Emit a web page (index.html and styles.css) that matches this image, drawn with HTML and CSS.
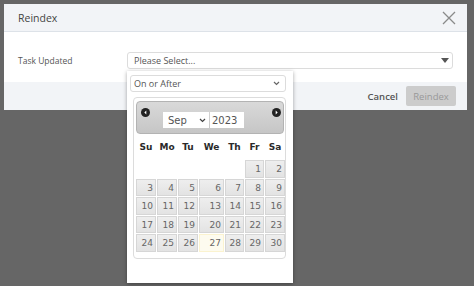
FILE: index.html
```html
<!DOCTYPE html>
<html>
<head>
<meta charset="utf-8">
<link rel="stylesheet" href="styles.css">
</head>
<body>
<div class="modal">
  <div class="modal-header">
    <span class="title">Reindex</span>
    <svg class="close" width="14" height="14" viewBox="0 0 14 14"><path d="M1 1 L13 13 M13 1 L1 13" stroke="#8a8a8a" stroke-width="1.3" fill="none"/></svg>
  </div>
  <div class="modal-body">
    <label class="label">Task Updated</label>
    <div class="field">
      <div class="select">
        <span>Please Select...</span>
        <svg width="8" height="5" viewBox="0 0 8 5"><path d="M0 0 H8 L4 5 Z" fill="#555"/></svg>
      </div>
      <div class="popup">
        <div class="inner-select">
          <span>On or After</span>
          <svg width="7" height="5" viewBox="0 0 7 5"><path d="M1 1 L3.5 3.5 L6 1" stroke="#666" stroke-width="1.2" fill="none"/></svg>
        </div>
        <div class="datepicker">
          <div class="dp-header">
            <span class="nav"><svg width="9" height="9" viewBox="0 0 9 9"><circle cx="4.5" cy="4.5" r="4.5" fill="#222"/><path d="M5.3 2.6 L3.3 4.5 L5.3 6.4 Z" fill="#fff"/></svg></span>
            <div class="dp-title">
              <div class="month">Sep<svg width="7" height="5" viewBox="0 0 7 5"><path d="M1 1 L3.5 3.5 L6 1" stroke="#444" stroke-width="1.2" fill="none"/></svg></div>
              <div class="year">2023</div>
            </div>
            <span class="nav"><svg width="9" height="9" viewBox="0 0 9 9"><circle cx="4.5" cy="4.5" r="4.5" fill="#222"/><path d="M3.7 2.6 L5.7 4.5 L3.7 6.4 Z" fill="#fff"/></svg></span>
          </div>
          <div class="dp-grid">
            <div class="dn">Su</div><div class="dn">Mo</div><div class="dn">Tu</div><div class="dn">We</div><div class="dn">Th</div><div class="dn">Fr</div><div class="dn">Sa</div>
            <div class="blank"></div><div class="blank"></div><div class="blank"></div><div class="blank"></div><div class="blank"></div><div class="day">1</div><div class="day">2</div>
            <div class="day">3</div><div class="day">4</div><div class="day">5</div><div class="day">6</div><div class="day">7</div><div class="day">8</div><div class="day">9</div>
            <div class="day">10</div><div class="day">11</div><div class="day">12</div><div class="day">13</div><div class="day">14</div><div class="day">15</div><div class="day">16</div>
            <div class="day">17</div><div class="day">18</div><div class="day">19</div><div class="day">20</div><div class="day">21</div><div class="day">22</div><div class="day">23</div>
            <div class="day">24</div><div class="day">25</div><div class="day">26</div><div class="day today">27</div><div class="day">28</div><div class="day">29</div><div class="day">30</div>
          </div>
        </div>
      </div>
    </div>
  </div>
  <div class="modal-footer">
    <span class="cancel">Cancel</span>
    <span class="btn">Reindex</span>
  </div>
</div>
</body>
</html>
```

FILE: styles.css
```css
html, body {
  margin: 0;
  padding: 0;
  background: #666666;
  width: 474px;
  height: 286px;
  overflow: hidden;
}
body {
  padding: 4px 0 0 4px;
  box-sizing: border-box;
  font-family: "Open Sans", "DejaVu Sans", sans-serif;
}
.modal {
  width: 463px;
  background: #fff;
}
.modal-header {
  height: 27px;
  border-bottom: 1px solid #dde2e8;
  background: #f2f4f7;
  display: flex;
  align-items: center;
  justify-content: space-between;
  padding: 0 11px 0 14px;
}
.title {
  font-size: 10.5px;
  color: #444;
}
.close {
  display: block;
  margin-top: 1px;
}
.modal-body {
  height: 50px;
  box-sizing: border-box;
  padding: 20px 14px 0 14px;
  display: flex;
  align-items: flex-start;
}
.label {
  width: 109px;
  font-size: 8.5px;
  color: #555;
  line-height: 17px;
}
.field {
  position: relative;
  width: 326px;
}
.select {
  height: 17px;
  box-sizing: border-box;
  border: 1px solid #dcdcdc;
  border-radius: 3px;
  display: flex;
  align-items: center;
  justify-content: space-between;
  padding: 0 3px 0 6px;
  font-size: 9px;
  color: #555;
}
.popup {
  position: absolute;
  left: 0;
  top: 19px;
  width: 166px;
  height: 212px;
  box-sizing: border-box;
  background: #fff;
  box-shadow: 0 1px 4px rgba(0,0,0,0.35);
  padding: 4px 7px 0 3px;
  z-index: 5;
}
.inner-select {
  height: 17px;
  box-sizing: border-box;
  border: 1px solid #dcdcdc;
  border-radius: 3px;
  display: flex;
  align-items: center;
  justify-content: space-between;
  padding: 0 5px 0 3px;
  font-size: 9px;
  color: #555;
}
.datepicker {
  margin: 5px 0 0 3px;
  width: 153px;
  box-sizing: border-box;
  border: 1px solid #dcdcdc;
  border-radius: 4px;
  padding: 3px 1px 6px 2px;
  font-family: "DejaVu Sans", Verdana, sans-serif;
}
.dp-header {
  height: 33px;
  box-sizing: border-box;
  border: 1px solid #b3b3b3;
  border-radius: 4px;
  background: linear-gradient(#d9d9d9, #c6c6c6);
  display: flex;
  align-items: flex-start;
  padding: 6px 4px 0 4px;
}
.nav {
  display: block;
  width: 9px;
  height: 9px;
}
.nav svg { display: block; }
.dp-title {
  display: flex;
  gap: 1px;
  margin-left: 13px;
  margin-top: 4px;
}
.month, .year {
  height: 16px;
  background: #fff;
  font-size: 10px;
  color: #555;
  display: flex;
  align-items: center;
  box-sizing: border-box;
}
.month {
  width: 46px;
  justify-content: space-between;
  padding: 0 3px 0 5px;
}
.year {
  width: 34px;
  padding-left: 2px;
  margin-right: 28px;
}
.dp-grid {
  display: grid;
  grid-template-columns: 20px 20px 20px 25px 19px 19px 20px;
  grid-template-rows: 25px;
  grid-auto-rows: 17.5px;
  column-gap: 1px;
  row-gap: 1px;
}
.dn {
  font-size: 9px;
  font-weight: bold;
  color: #2a2a2a;
  display: flex;
  align-items: center;
  justify-content: center;
  padding-top: 1px;
}
.day {
  border: 1px solid #d6d6d6;
  background: linear-gradient(#eeeeee, #e3e3e3);
  color: #666;
  font-size: 9px;
  text-align: right;
  padding-right: 2px;
  box-sizing: border-box;
  line-height: 16px;
}
.day.today {
  border-color: #fbf3cf;
  background: #fdfbef;
}
.modal-footer {
  height: 28px;
  background: #f2f4f7;
  display: flex;
  align-items: center;
  justify-content: flex-end;
  padding-right: 11px;
  gap: 8px;
}
.cancel {
  font-size: 9.5px;
  font-weight: 600;
  color: #555;
}
.btn {
  width: 50px;
  height: 20px;
  background: #cccccc;
  color: #999;
  font-size: 9.5px;
  display: flex;
  align-items: center;
  justify-content: center;
  border-radius: 2px;
}
```
